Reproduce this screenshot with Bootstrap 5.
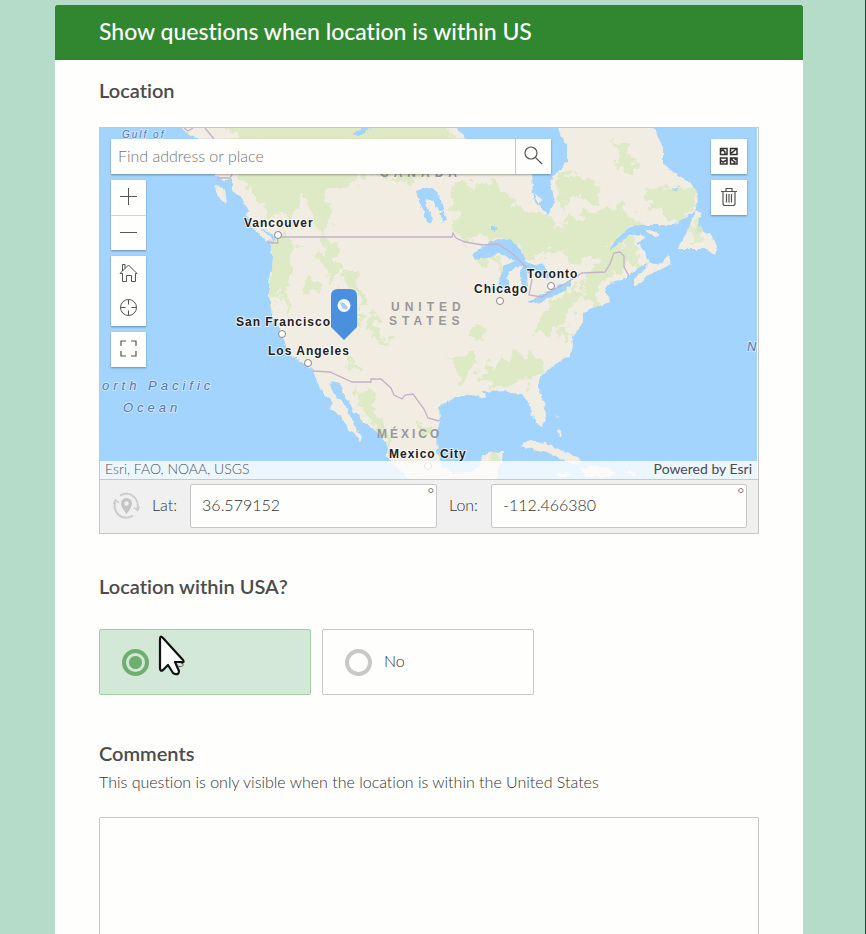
<!DOCTYPE html>
<html lang="en">
<head>
<meta charset="utf-8">
<meta name="viewport" content="width=device-width, initial-scale=1">
<title>Show questions when location is within US</title>
<link rel="stylesheet" href="https://cdn.jsdelivr.net/npm/bootstrap@5.3.0/dist/css/bootstrap.min.css">
<style>
body{font-family:Lato,"Open Sans",sans-serif;font-variant-ligatures:none;font-weight:300;color:#333;font-size:16px;line-height:20px;background:#b5dcc8}
input{font-weight:300}
.pane{scrollbar-width:none;border-right:1px solid #2c4038;padding:5px 62px 0 55px}
.pane::-webkit-scrollbar{display:none}
.sheet{background:#fefefc;min-height:100%}
.sheet-head{background:#30872f;height:55px;padding:0 44px 4px;border-radius:2px 2px 0 0}
.sheet-head h1{font-size:23px;line-height:28px;font-weight:500;margin:0}
.sheet-body{padding:18px 44px 30px}
.q-title{font-size:20px;line-height:24px;font-weight:600;color:#4c4c4c;margin:0}
.q-block{margin-top:40px}
.q-block+.q-block{margin-top:46px}
.geo{border:1px solid #c8c8c8;margin-top:25px}
.map{height:352px;padding-right:1px;border-bottom:1px solid #c8c8c8;overflow:hidden;background:#fefefc}
.map>svg{display:block;width:100%;height:100%}
.tools{inset:0;padding:11px 11px 0 11px}
.tile{background:#fefefc;box-shadow:0 1px 2px rgba(0,0,0,.35)}
.tile button{display:flex;align-items:center;justify-content:center;width:35px;height:35px;border:0;background:none;padding:0 1px 2px 0;color:#555}
.tool-stack{gap:6px}
.tool-right .tile button{width:36px}
.tile button+button{border-top:1px solid #d5d5d5}
.tile.plain button+button{border-top:0}
.find{width:440px;height:35px}
.find input{border:0;background:none;padding:0 7px 2px;outline:0;color:#4c4c4c;min-width:0}
.find input::placeholder{color:#777;opacity:1}
.find button{border-left:1px solid #ccc;width:36px}
.credit{bottom:0;left:0;right:1px;height:18px;line-height:16px;padding:0 5px;font-size:14px;background:rgba(255,255,255,.78);color:#555}
.credit a{color:#4c4c4c;font-weight:400;text-decoration:none}
.coords{background:#f0f0f0;height:53px;padding:0 11px 2px 13px}
.coords input,.answer{border:1px solid #c8c8c8;border-radius:2px;background:#fefefc;color:#333;outline:0}
.coords input{width:100%;height:44px;padding:0 11px 2px}
.coords label{margin:0 13px 2px 12px}
.deg{right:3px;top:1px;font-size:16px;line-height:16px}
.lat-box{flex:246 1 0}.lon-box{flex:255 1 0}
.choices{margin-top:31px;gap:11px}
.choice{border:1px solid #c8c8c8;border-radius:2px;width:212px;height:66px;padding:0 22px;gap:12px;cursor:pointer}
.choice span{padding-bottom:2px}
.choice input{appearance:none;width:27px;height:27px;border:4px solid #c8c8c8;border-radius:50%;margin:0;background:#fefefc}
.choice.on{background:#d3e8d7;border-color:#a5cfa7}
.choice.on input{border-color:#6eae6e;background:radial-gradient(circle,#6eae6e 6px,#d3e8d7 7px)}
.pointer{left:59px;top:5px}
.hint{margin:7px 0 0}
.answer{display:block;width:100%;height:150px;margin-top:25px;resize:none}
/* map lettering */
.city{font:bold 12px "Liberation Sans",sans-serif;letter-spacing:1px;fill:#222;stroke:#fff;stroke-width:2px;paint-order:stroke;stroke-opacity:.7}
.land-name{font:bold 12px "Liberation Sans",sans-serif;letter-spacing:5px;fill:#98989d}
.land-name .tight{letter-spacing:3px}
.sea{font:italic 13px "Liberation Sans",sans-serif;letter-spacing:4px;fill:#5576b8;stroke:#cbe6fb;stroke-width:2px;paint-order:stroke}
.sea .gulf{font-size:10px;letter-spacing:2px}
</style>
<script src="https://cdn.jsdelivr.net/npm/bootstrap@5.3.0/dist/js/bootstrap.bundle.min.js"></script>
</head>
<body>
<div class="pane vh-100 overflow-auto">
<main class="sheet">
<header class="sheet-head d-flex align-items-center text-white"><h1>Show questions when location is within US</h1></header>
<form class="sheet-body">
<section>
<h2 class="q-title">Location</h2>
<div class="geo">
<div class="map position-relative">
<svg viewBox="100 128 657 351" preserveAspectRatio="xMidYMid slice" role="img" aria-label="Map of North America">
<defs>
<filter id="coast" x="0" y="0" width="100%" height="100%"><feTurbulence type="fractalNoise" baseFrequency=".18" numOctaves="2" seed="4"/><feDisplacementMap in="SourceGraphic" scale="5" xChannelSelector="R" yChannelSelector="G"/></filter>
<filter id="woods" x="-5%" y="-5%" width="110%" height="110%"><feTurbulence type="fractalNoise" baseFrequency=".09" numOctaves="4" seed="9"/><feDisplacementMap in="SourceGraphic" scale="26" xChannelSelector="R" yChannelSelector="G"/></filter>
<path id="landmass" d="M180 120 183 130 191 136 200 140 207 158 216 176 223 180 232 179 232 190 237 195 242 198 245 206 248 210 247 217 252 226 263 230 276 237 275 242 270 243 271 250 273 257 272 270 269 283 269 300 272 313 276 322 280 330 285 343 288 351 293 358 307 364 313 370 317 382 323 393 333 403 328 408 338 413 345 423 347 430 353 433 360 442 363 437 358 432 353 422 345 405 337 397 330 387 331 381 340 383 343 390 345 398 349 401 352 408 363 422 378 433 386 442 388 448 387 457 397 467 417 485 496 485 497 472 502 462 503 452 493 452 482 455 480 467 470 472 453 473 443 467 438 453 437 433 440 420 439 407 455 397 470 395 487 398 483 392 503 390 511 393 522 394 527 401 530 407 532 415 537 423 543 427 546 418 545 407 541 395 539 390 539 380 543 374 553 367 560 361 568 357 573 348 572 337 578 329 583 322 583 313 592 308 602 305 610 301 606 293 605 287 610 283 627 277 640 267 650 263 643 270 634 279 634 286 640 284 647 275 660 270 671 264 668 254 663 263 653 264 647 260 645 252 637 243 645 238 640 234 628 236 618 244 608 252 616 240 630 226 640 225 673 225 684 218 697 210 698 193 690 182 676 174 663 163 663 147 657 135 650 120 555 120 557 128 567 145 567 162 550 180 555 202 548 215 541 208 533 198 532 168 510 155 467 140 457 128 453 120Z"/>
<clipPath id="on-land"><use href="#landmass"/></clipPath>
</defs>
<rect x="90" y="100" width="700" height="400" fill="#a2d4fd"/>
<g filter="url(#coast)">
<use href="#landmass" fill="#f2ede2"/>
<g fill="#f2ede2"><path d="M215 185 220 186 224 191 226 203 221 200 216 192ZM251 224 262 230 275 241 266 240 256 231ZM696 211 701 213 695 232 710 233 718 248 714 255 706 249 692 249 677 249 688 230ZM645 228 660 234 658 238 648 233ZM520 446 529 441 545 443 556 448 570 454 583 461 577 464 562 460 547 452 532 449ZM580 469 592 466 608 468 616 474 603 478 586 476ZM556 474 566 472 570 476 559 477ZM626 472 636 472 634 476 627 475ZM555 415 559 416 557 418ZM558 427 562 433 561 437 557 432ZM533 193 542 199 539 203Z"/></g>
</g>
<g clip-path="url(#on-land)" opacity=".9"><g filter="url(#woods)" fill="#dce9c3">
<path d="M230 120 453 120 447 145 415 183 372 175 340 188 326 188 331 225 324 237 313 210 301 195 293 226 272 215 246 190 237 171Z"/>
<path d="M270 238 288 235 296 244 292 266 287 285 292 318 285 310 278 290 270 315 265 270ZM324 238 337 245 340 267 332 286 326 266 318 252ZM342 272 360 273 361 292 370 303 360 306 352 290ZM305 273 322 284 316 294 305 286Z"/>
<path d="M452 183 490 183 530 212 560 224 595 210 620 205 644 225 616 238 601 254 575 262 555 251 540 254 520 263 518 248 501 240 480 238 468 245 455 230Z"/>
<path d="M645 190 665 188 692 188 697 206 680 220 662 213 648 204ZM614 140 625 142 635 166 629 177 617 160ZM558 178 580 174 600 185 605 196 589 205 575 196 560 210ZM598 253 615 245 633 240 640 255 635 265 615 274 595 290 596 305 582 296 585 275Z"/>
<path d="M551 305 568 286 582 292 575 310 554 328 536 338 535 326 543 315ZM559 328 571 330 566 343 557 336ZM450 360 472 355 475 373 462 380ZM484 368 500 357 535 355 542 367 525 384 505 382 491 388 480 381ZM472 330 483 328 481 340 474 338Z"/>
<path d="M354 386 370 393 377 412 385 430 393 448 389 456 374 427 362 411ZM420 422 431 430 426 440 416 433ZM345 355 358 363 362 372 348 366ZM475 253 498 254 508 268 493 266ZM484 460 498 455 495 465 484 468ZM500 472 515 477 512 485 494 485ZM410 473 425 480 406 479Z"/>
<path d="M367 310 378 324 385 338 391 350 386 346 368 332ZM352 306 361 316 357 326 350 316ZM386 340 393 341 390 349Z"/>
</g></g>
<g filter="url(#woods)" fill="#dce9c3" fill-opacity=".8"><path d="M697 220 706 232 701 241 687 243Z"/></g>
<g filter="url(#coast)" fill="#a2d4fd">
<path d="M353 134 362 128 370 128 360 136ZM416 192 422 189 431 187 437 192 441 202 444 210 438 210 433 201 426 199 427 208 431 214 432 222 427 222 424 212 420 203ZM441 212 445 212 446 220 442 222ZM491 225 497 226 495 232 491 231ZM472 256 482 246 497 239 510 240 522 251 526 263 514 262 500 252 491 257 475 260ZM502 291 498 286 501 274 504 265 513 262 527 263 544 265 551 276 545 279 532 269 527 274 528 287 523 288 519 276 522 266 512 268 507 277 509 287 506 294ZM527 303 538 297 551 290 558 286 571 282 571 286 555 296 540 302 531 304ZM671 190 679 187 676 191Z"/>
</g>
<g fill="none" stroke="#c3b1cd" stroke-width="1.3"><path d="M276 237 452 237 453 233 456 238 465 242 483 245 498 244 513 254 526 267 532 279 529 295 542 297 551 291 563 285 574 278 582 273 605 272 610 264 614 253 620 252 624 256 624 267 629 276M313 371 330 372 352 382 371 382 371 379 381 379 391 388 394 395 402 399 405 395 413 394 424 409 428 418 439 421M184 128 188 131 193 128M205 128 214 139M217 178 230 178 234 171M277 237 278 243 268 243"/></g>
<g fill="#fff" stroke="#888" stroke-width="1"><circle cx="278" cy="235" r="3.5"/><circle cx="282" cy="334" r="3.5"/><circle cx="308" cy="363" r="3.5"/><circle cx="500" cy="301" r="3.5"/><circle cx="551" cy="286" r="3.5"/><circle cx="428" cy="466" r="3.5"/></g>
<g class="city"><text x="244" y="227">Vancouver</text><text x="236" y="326">San Francisco</text><text x="268" y="355">Los Angeles</text><text x="474" y="293">Chicago</text><text x="527" y="278">Toronto</text><text x="389" y="458">Mexico City</text></g>
<g class="land-name"><text x="391" y="311">UNITED</text><text x="389" y="325">STATES</text><text x="380" y="177">CANADA</text><text class="tight" x="377" y="438">MÉXICO</text></g>
<g class="sea"><text x="102" y="390">orth Pacific</text><text x="123" y="412">Ocean</text><text x="747" y="351">N</text><text class="gulf" x="122" y="138">Gulf of</text></g>
<path d="M331 296Q331 289 338 289H350Q357 289 357 296V327L344 340 331 327Z" fill="#4a90df"/>
<circle cx="344" cy="305.500" r="6.500" fill="#f5fafc"/><path d="M340 303Q343 301 345 304L348 307 346 310 342 308Z" fill="#a8cff2"/>
</svg>
<div class="credit position-absolute d-flex justify-content-between"><span>Esri, FAO, NOAA, USGS</span><span><a href="#powered">Powered by Esri</a></span></div>
<div class="tools position-absolute d-flex justify-content-between align-items-start">
<div class="tool-stack d-flex flex-column align-items-start">
<div class="find tile d-flex"><input class="flex-grow-1" type="text" placeholder="Find address or place" aria-label="Find address or place"><button type="button" aria-label="Search"><svg width="20" height="20" fill="none" stroke="currentColor" stroke-width="1.200"><circle cx="8" cy="7" r="6"/><path d="M12.300 11.300 19 18"/></svg></button></div>
<div class="tile"><button type="button" aria-label="Zoom in"><svg width="17" height="17" stroke="currentColor" stroke-width="1"><path d="M0 8.500H17M8.500 0V17"/></svg></button><button type="button" aria-label="Zoom out"><svg width="17" height="17" stroke="currentColor"><path d="M0 8.500H17"/></svg></button></div>
<div class="tile plain"><button type="button" aria-label="Home"><svg width="19" height="19" fill="none" stroke="currentColor"><path d="M1 10.500 9.500 2 18 10.500H16.500V18.500H12.500V12.500H7.500V18.500H3.500V10.500H1M3.500 8V1.500H6V5.500"/></svg></button><button type="button" aria-label="My location"><svg width="19" height="19" fill="none" stroke="currentColor"><circle cx="9.500" cy="9.500" r="8"/><path d="M9.500 1.500V6.500M9.500 12.500V17.500M1.500 9.500H6.500M12.500 9.500H17.500"/></svg></button></div>
<div class="tile"><button type="button" aria-label="Full screen"><svg width="17" height="17" fill="none" stroke="currentColor" stroke-width="1.200"><path d="M1 6V1H6M11 1H16V6M16 11V16H11M6 16H1V11"/></svg></button></div>
</div>
<div class="tool-stack tool-right d-flex flex-column">
<div class="tile"><button type="button" aria-label="Basemaps"><svg width="19" height="18" fill="none" stroke="#333" stroke-width="1.500"><path d="M1.500 1.500H8V7.500H1.500ZM11.500 1.500H18V7.500H11.500ZM1.500 11H8V17H1.500ZM11.500 11H18V17H11.500ZM2 4 4 3 6 5 6 7M12 6 14 5 17 2M2 13.500 4 15 8 13M13 11 13 13 16 15 14 17M15 11 17 13"/></svg></button></div>
<div class="tile"><button type="button" aria-label="Delete"><svg width="18" height="20" fill="none" stroke="currentColor" stroke-width="1.200"><path d="M1 4.500H17M6 4V1.500H12V4M3 4.500V16.500Q3 18.500 5 18.500H13Q15 18.500 15 16.500V4.500M6.500 7V15.500M9 7V15.500M11.500 7V15.500"/></svg></button></div>
</div>
</div>
</div>
<div class="coords d-flex align-items-center">
<svg width="27" height="27" class="flex-shrink-0" fill="none" stroke="#ccc" stroke-width="2" aria-hidden="true"><path d="M7 3.500A11.500 11.500 0 0 1 24 17M20 23.500A11.500 11.500 0 0 1 2.500 10"/><path d="M21 15.500 24.500 18.500 26.500 14.500M.500 12 2.500 8 6 11" stroke-width="1.500"/><path d="M13.500 22C10 17 8 14.500 8 11.500A5.500 5.500 0 0 1 19 11.500C19 14.500 17 17 13.500 22Z" fill="#c4c4c4" stroke="none"/><circle cx="13.500" cy="11.500" r="2.200" fill="#f0f0f0" stroke="none"/></svg>
<label for="lat">Lat:</label><div class="lat-box position-relative"><input id="lat" type="text" value="36.579152"><span class="deg position-absolute">°</span></div>
<label for="lon">Lon:</label><div class="lon-box position-relative"><input id="lon" type="text" value="-112.466380"><span class="deg position-absolute">°</span></div>
</div>
</div>
</section>
<section class="q-block">
<h2 class="q-title" id="within">Location within USA?</h2>
<div class="choices d-flex position-relative" role="radiogroup" aria-labelledby="within">
<label class="choice on d-flex align-items-center"><input type="radio" name="within" checked><span>Yes</span></label>
<label class="choice d-flex align-items-center"><input type="radio" name="within"><span>No</span></label>
<svg class="pointer position-absolute" width="28" height="44" viewBox="0 0 28 44" aria-hidden="true"><path d="M2 5Q2 1 5 4L25 26Q27 29 23 28H17L21 37Q21 41 17 40L15 39 10 31 5 36Q2 38 2 34Z" fill="#fdfcfd" stroke="#111" stroke-width="2.200" stroke-linejoin="round"/></svg>
</div>
</section>
<section class="q-block">
<h2 class="q-title" id="comments">Comments</h2>
<p class="hint" id="hint">This question is only visible when the location is within the United States</p>
<textarea class="answer" aria-labelledby="comments" aria-describedby="hint"></textarea>
</section>
</form>
</main>
</div>
</body>
</html>
